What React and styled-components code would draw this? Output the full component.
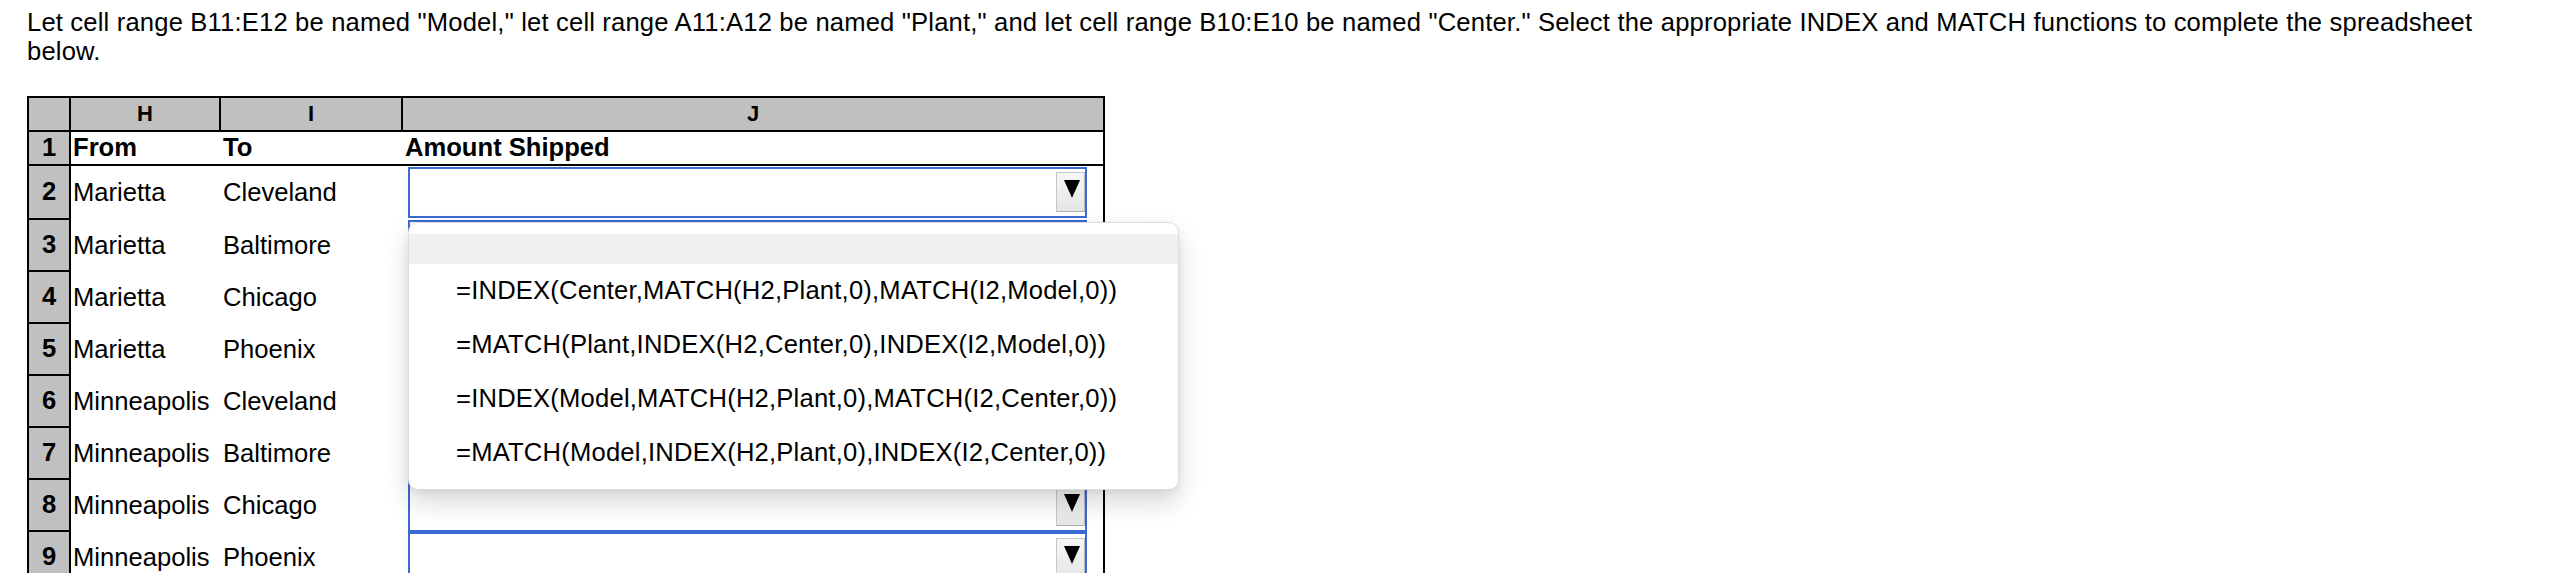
import React from 'react';
import styled, { createGlobalStyle } from 'styled-components';

const Global = createGlobalStyle`
  html, body { margin: 0; padding: 0; background: #fff; }
  body { font-family: "Liberation Sans", Arial, Helvetica, sans-serif; color: #000; }
  * { box-sizing: border-box; }
`;

const Page = styled.div`
  padding: 8px 28px 0 27px;
  font-size: 25.6px;
  height: 588px;
  overflow: hidden;
`;

const Prompt = styled.p`
  margin: 0;
  line-height: 29.4px;
  letter-spacing: 0.17px;
`;

const SheetFrame = styled.div`
  position: relative;
  margin-top: 29px;
  width: 1200px;
`;

const Sheet = styled.div`
  display: grid;
  grid-template-columns: 42px 150px 182px 700px;
  grid-template-rows: 34px 34px 54px repeat(7, 52px);
  border: 2px solid #000;
  border-bottom: none;
  width: 1078px;
  height: 477px;
  overflow: hidden;
`;

const Corner = styled.div`
  background: #c0c0c0;
  border-right: 2px solid #000;
  border-bottom: 2px solid #000;
`;

const ColHead = styled.div`
  background: #c0c0c0;
  border-bottom: 2px solid #000;
  border-right: ${p => (p.$last ? 'none' : '2px solid #000')};
  display: flex;
  align-items: center;
  justify-content: center;
  font-weight: bold;
  font-size: 22px;
`;

const RowHead = styled.div`
  background: #c0c0c0;
  border-right: 2px solid #000;
  border-bottom: 2px solid #000;
  display: flex;
  align-items: center;
  justify-content: center;
  font-weight: bold;
`;

const Cell = styled.div`
  display: flex;
  align-items: center;
  padding-left: 2px;
  white-space: nowrap;
  font-weight: ${p => (p.$bold ? 'bold' : 'normal')};
  border-bottom: ${p => (p.$bold ? '2px solid #000' : 'none')};
`;

const SelectCell = styled.div`
  display: flex;
  align-items: stretch;
  padding: ${p => (p.$first ? '1px 16px 2px 5px' : '0 16px 0 5px')};
`;

const SelectBox = styled.div`
  flex: 1;
  border: 2px solid #3a6bd0;
  background: #fff;
  display: flex;
  align-items: center;
  justify-content: flex-end;
`;

const ArrowButton = styled.div`
  width: 29px;
  height: 40px;
  border: 1px solid #c6c6c6;
  border-right-color: #b8b8b8;
  border-bottom-color: #b0b0b0;
  background: linear-gradient(#f6f6f6, #e6e6e6);
  display: flex;
  justify-content: center;
  padding-top: 7px;
  padding-left: 2px;
`;

const Triangle = styled.span`
  width: 0;
  height: 0;
  border-left: 8.5px solid transparent;
  border-right: 8.5px solid transparent;
  border-top: 18px solid #000;
`;

const Popup = styled.div`
  position: absolute;
  left: 381px;
  top: 126px;
  width: 771px;
  height: 268px;
  background: #fff;
  border: 1px solid #dedede;
  border-radius: 10px;
  box-shadow: 0 12px 26px rgba(0, 0, 0, 0.16), 0 2px 6px rgba(0, 0, 0, 0.06);
  padding: 11px 0 9px;
  overflow: hidden;
`;

const BlankOption = styled.div`
  height: 30px;
  background: #f0f0f0;
`;

const Option = styled.div`
  height: 54px;
  display: flex;
  align-items: center;
  padding-left: 47px;
  white-space: nowrap;
  letter-spacing: 0.2px;
  color: #000;
`;

const rows = [
  ['Marietta', 'Cleveland'],
  ['Marietta', 'Baltimore'],
  ['Marietta', 'Chicago'],
  ['Marietta', 'Phoenix'],
  ['Minneapolis', 'Cleveland'],
  ['Minneapolis', 'Baltimore'],
  ['Minneapolis', 'Chicago'],
  ['Minneapolis', 'Phoenix'],
];

const options = [
  '=INDEX(Center,MATCH(H2,Plant,0),MATCH(I2,Model,0))',
  '=MATCH(Plant,INDEX(H2,Center,0),INDEX(I2,Model,0))',
  '=INDEX(Model,MATCH(H2,Plant,0),MATCH(I2,Center,0))',
  '=MATCH(Model,INDEX(H2,Plant,0),INDEX(I2,Center,0))',
];

export default function App() {
  return (
    <>
      <Global />
      <Page>
        <Prompt>
          Let cell range B11:E12 be named "Model," let cell range A11:A12 be named "Plant," and let cell range B10:E10 be named "Center." Select the appropriate INDEX and MATCH functions to complete the spreadsheet below.
        </Prompt>
        <SheetFrame>
          <Sheet>
            <Corner />
            <ColHead>H</ColHead>
            <ColHead>I</ColHead>
            <ColHead $last>J</ColHead>

            <RowHead>1</RowHead>
            <Cell $bold>From</Cell>
            <Cell $bold>To</Cell>
            <Cell $bold>Amount Shipped</Cell>

            {rows.map(([from, to], i) => (
              <React.Fragment key={i}>
                <RowHead>{i + 2}</RowHead>
                <Cell>{from}</Cell>
                <Cell>{to}</Cell>
                <SelectCell $first={i === 0}>
                  <SelectBox>
                    <ArrowButton>
                      <Triangle />
                    </ArrowButton>
                  </SelectBox>
                </SelectCell>
              </React.Fragment>
            ))}
          </Sheet>
          <Popup>
            <BlankOption />
            {options.map(o => (
              <Option key={o}>{o}</Option>
            ))}
          </Popup>
        </SheetFrame>
      </Page>
    </>
  );
}
